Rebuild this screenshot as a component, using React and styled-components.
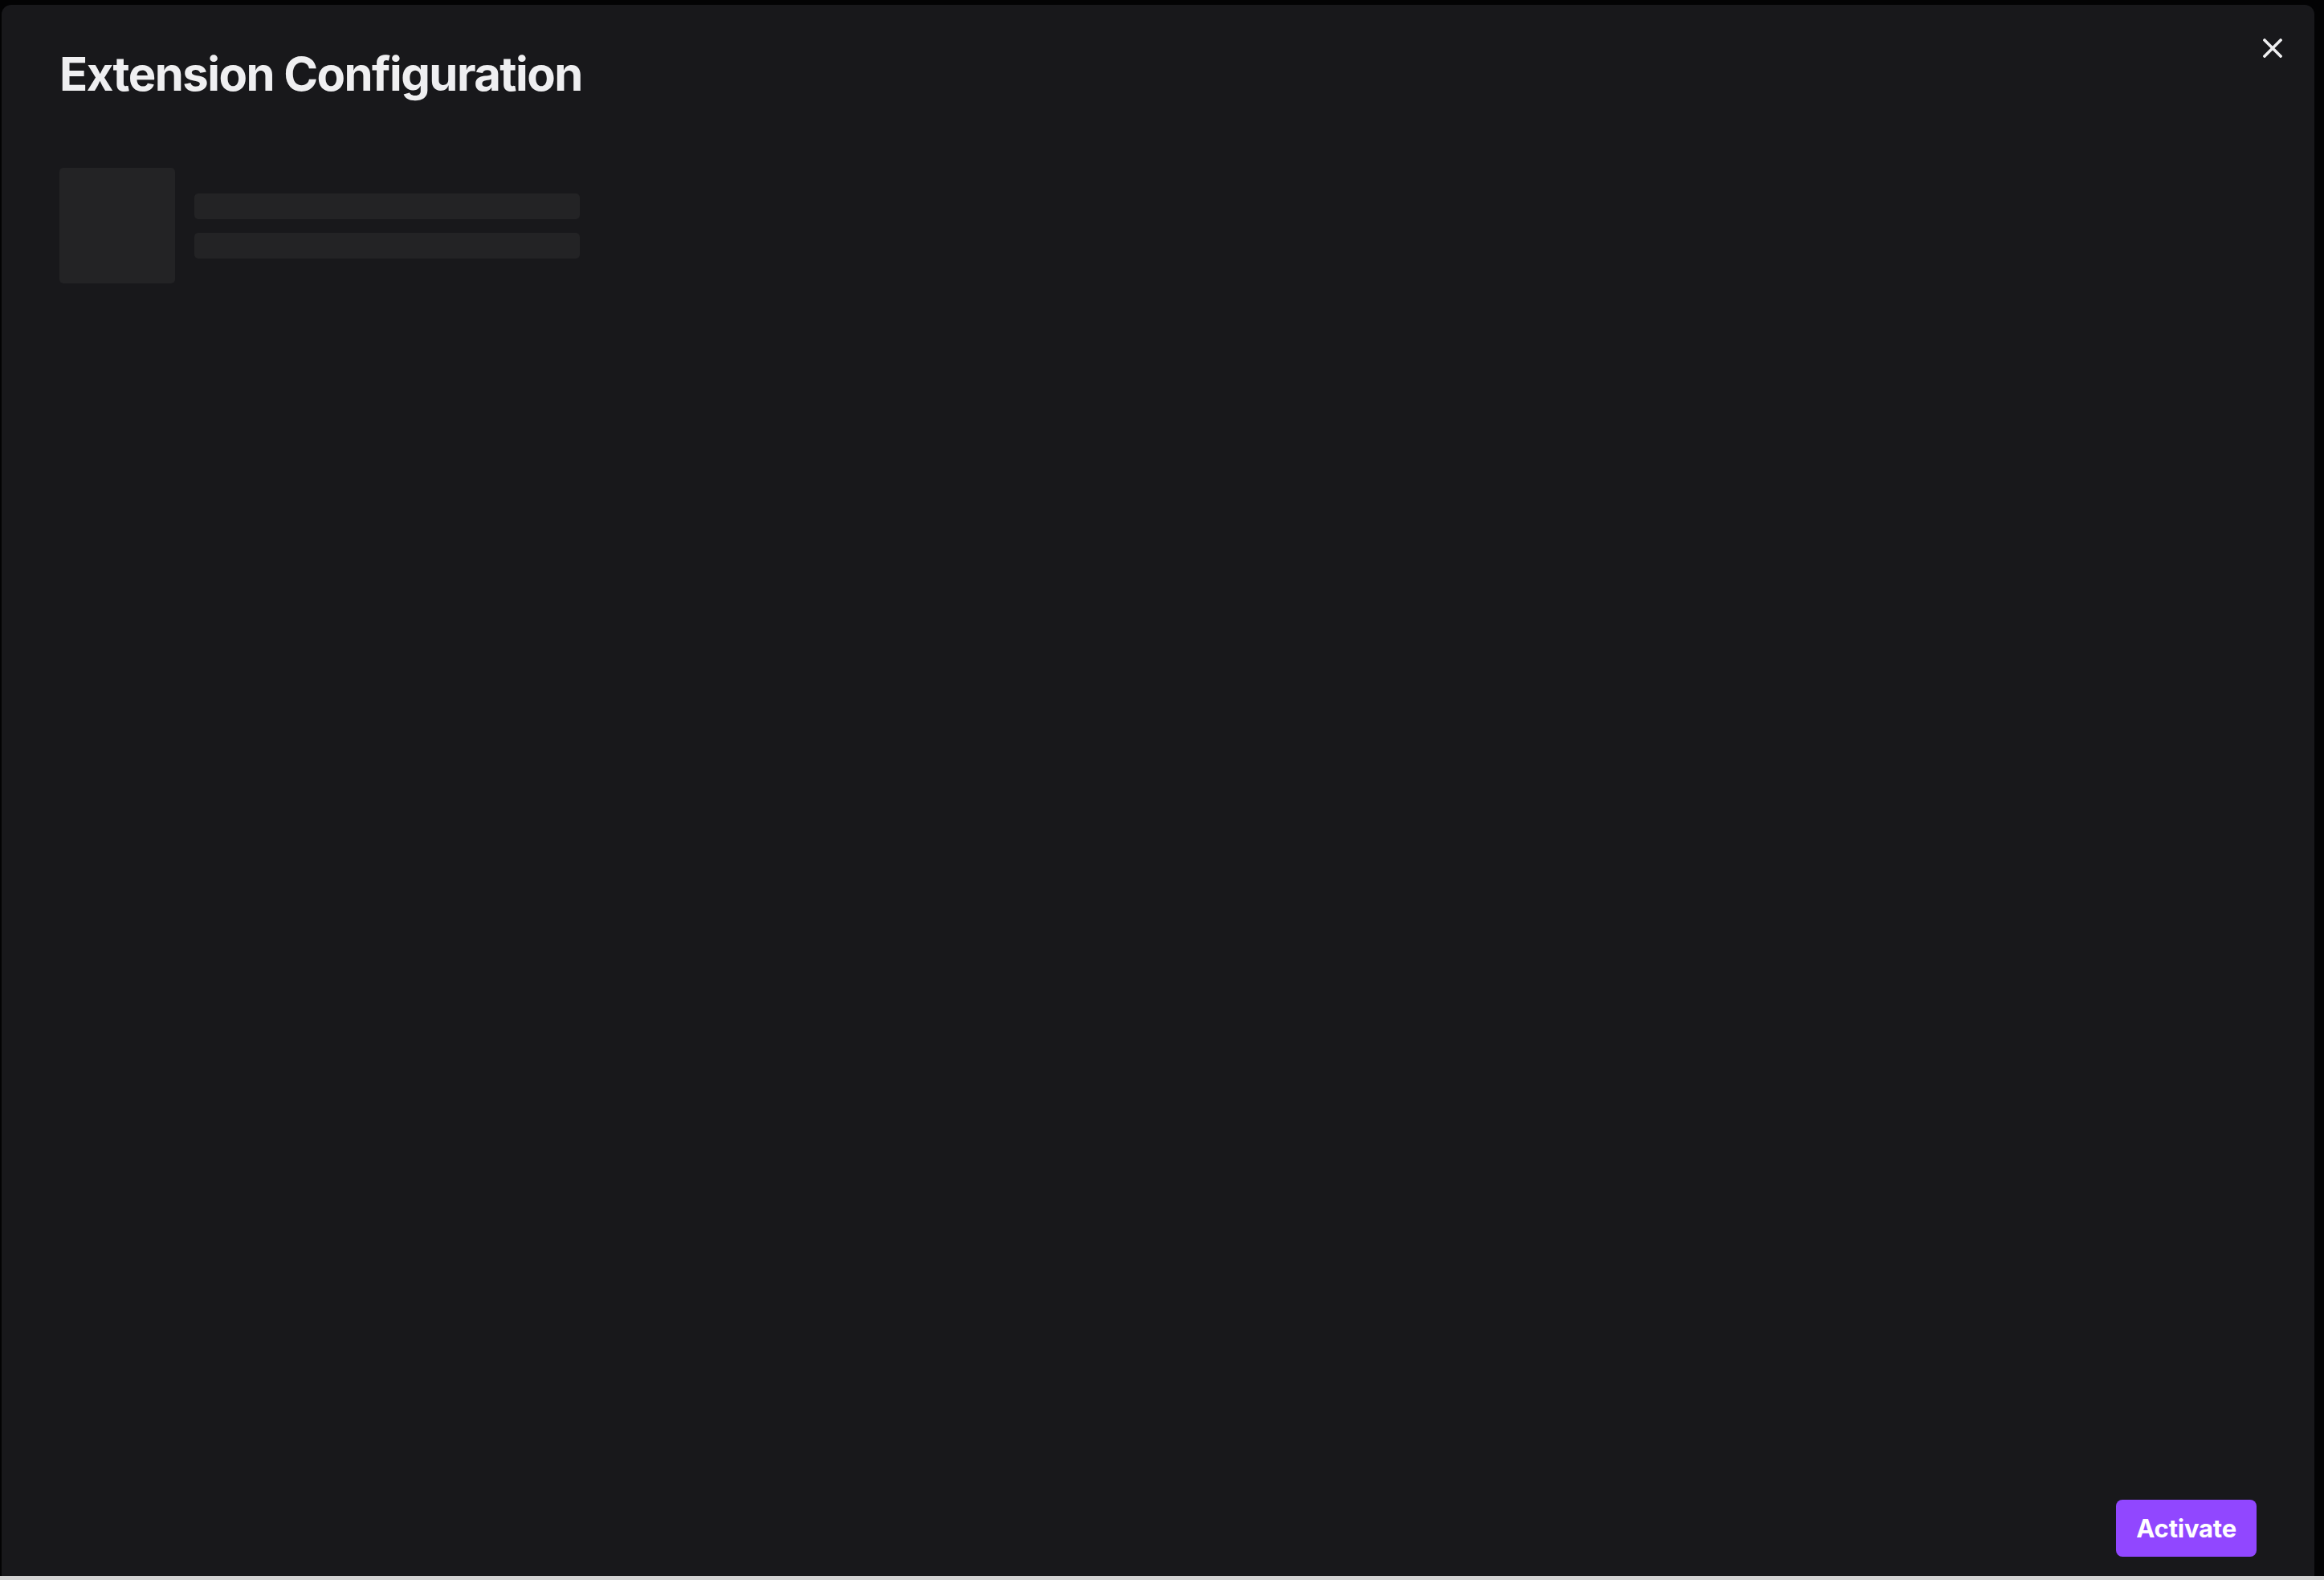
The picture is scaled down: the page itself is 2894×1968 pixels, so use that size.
import React from "react";
import styled, { createGlobalStyle } from "styled-components";

const Global = createGlobalStyle`
  html, body { margin: 0; padding: 0; background: #000; }
  body { font-family: Inter, "Noto Sans", sans-serif; -webkit-font-smoothing: antialiased; }
  * { box-sizing: border-box; }
`;

const Screen = styled.div`
  width: 2894px;
  height: 1968px;
  display: flex;
  flex-direction: column;
  background: #030304;
  overflow: hidden;
`;

const Stage = styled.div`
  flex: 1;
  display: flex;
  padding: 6px 12px 0 2px;
  min-height: 0;
`;

const Modal = styled.div`
  position: relative;
  flex: 1;
  display: flex;
  flex-direction: column;
  background: #18181b;
  border-radius: 12px 12px 0 0;
`;

const Header = styled.header`
  padding: 50px 72px 0 72px;
`;

const Title = styled.h2`
  margin: 0;
  font-family: Inter, "Noto Sans", sans-serif;
  font-weight: 700;
  font-size: 58px;
  line-height: 72px;
  letter-spacing: -1.55px;
  color: #efeff1;
`;

const CloseButton = styled.button`
  position: absolute;
  top: 30px;
  right: 29px;
  width: 47px;
  height: 47px;
  padding: 0;
  border: none;
  background: transparent;
  display: flex;
  align-items: center;
  justify-content: center;
  cursor: pointer;
`;

const Body = styled.div`
  flex: 1;
  padding: 81px 72px 0 72px;
`;

const SkeletonRow = styled.div`
  display: flex;
  align-items: center;
  gap: 24px;
`;

const SkeletonThumb = styled.div`
  width: 144px;
  height: 144px;
  border-radius: 5px;
  background: #232325;
`;

const SkeletonLines = styled.div`
  display: flex;
  flex-direction: column;
  gap: 17px;
`;

const SkeletonLine = styled.div`
  width: ${(p) => p.$w}px;
  height: 32px;
  border-radius: 5px;
  background: #232325;
`;

const Footer = styled.footer`
  display: flex;
  justify-content: flex-end;
  padding: 0 72px 24px 72px;
`;

const PrimaryButton = styled.button`
  height: 71px;
  padding: 0 25px;
  border: none;
  border-radius: 8px;
  background: #9147ff;
  color: #ffffff;
  font-family: Inter, "Noto Sans", sans-serif;
  font-weight: 700;
  font-size: 31px;
  letter-spacing: -0.2px;
  line-height: 1;
  cursor: pointer;
`;

const BottomStrip = styled.div`
  height: 5px;
  background: #d4d4d4;
`;

const CloseIcon = () => (
  <svg width="24" height="24" viewBox="0 0 24 24" fill="none">
    <path d="M2 2 L22 22 M22 2 L2 22" stroke="#efeff1" strokeWidth="3.6" strokeLinecap="square" />
  </svg>
);

export default function App() {
  return (
    <>
      <Global />
      <Screen>
        <Stage>
          <Modal>
            <Header>
              <Title>Extension Configuration</Title>
            </Header>
            <CloseButton aria-label="Close">
              <CloseIcon />
            </CloseButton>
            <Body>
              <SkeletonRow>
                <SkeletonThumb />
                <SkeletonLines>
                  <SkeletonLine $w={480} />
                  <SkeletonLine $w={480} />
                </SkeletonLines>
              </SkeletonRow>
            </Body>
            <Footer>
              <PrimaryButton>Activate</PrimaryButton>
            </Footer>
          </Modal>
        </Stage>
        <BottomStrip />
      </Screen>
    </>
  );
}
